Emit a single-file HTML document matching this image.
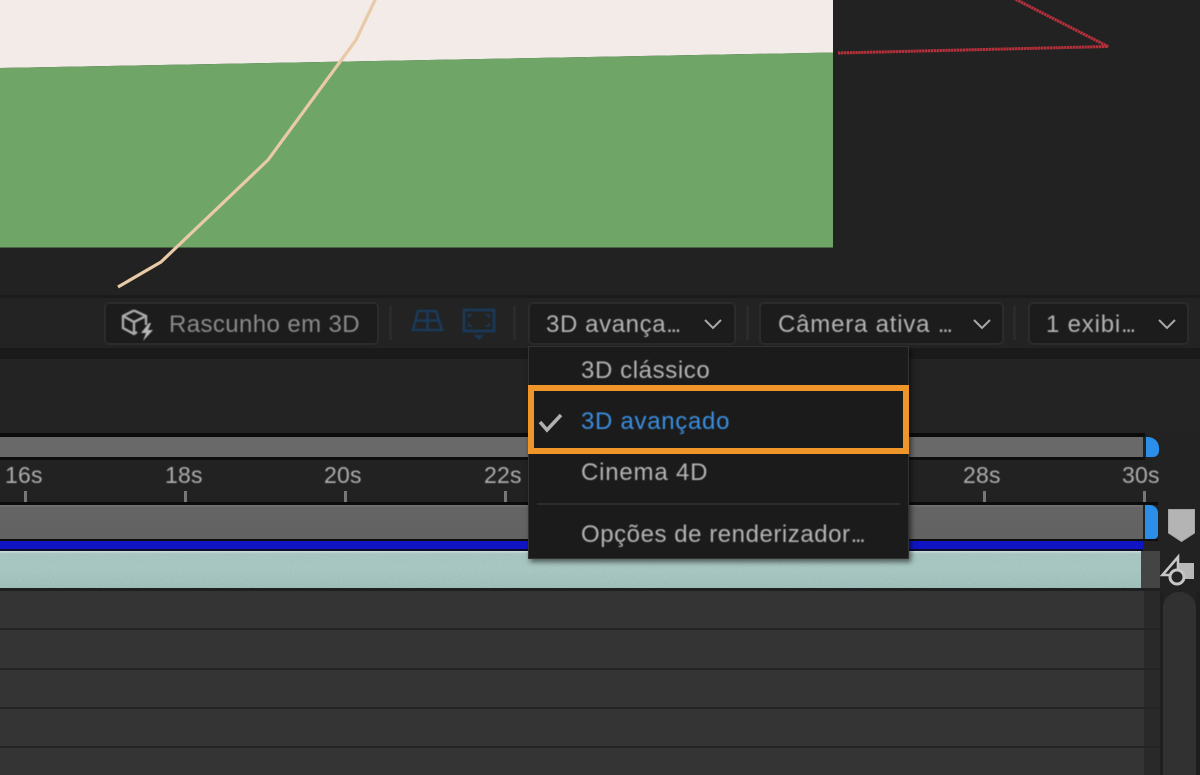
<!DOCTYPE html>
<html lang="pt">
<head>
<meta charset="utf-8">
<title>Renderizador 3D</title>
<style>
html,body{margin:0;padding:0;background:#222;}
#s{position:relative;width:1200px;height:775px;overflow:hidden;background:#222;font-family:"Liberation Sans",sans-serif;}
.b{position:absolute;}
.t{position:absolute;white-space:nowrap;font-size:24px;line-height:30px;letter-spacing:.6px;color:#b4b4b4;filter:blur(.5px);}
.d{letter-spacing:-2.4px;}
.btn{position:absolute;box-sizing:border-box;height:43px;top:302px;background:#1c1c1c;border:2px solid #2b2b2b;border-radius:5px;}
.rs{position:absolute;white-space:nowrap;font-size:23px;line-height:28px;color:#adadad;top:461px;letter-spacing:.2px;filter:blur(.5px);}
.tick{position:absolute;top:491px;width:3px;height:11px;background:#777;}
.row{position:absolute;left:0;width:1160px;height:2px;background:#242424;}
svg{position:absolute;overflow:visible;}
</style>
</head>
<body>
<div id="s">
<svg style="left:0;top:0" width="1200" height="300" viewBox="0 0 1200 300">
<polygon points="0,0 833,0 833,52.500 0,68" fill="#f3ebe8"/>
<polygon points="0,68 833,52.500 833,247.500 0,247.500" fill="#6fa566"/>
<polyline points="376,-2 356,40 268,160 161,262 118,287" fill="none" stroke="#e8cba6" stroke-width="3.200"/>
<polyline points="838,53 1108,46.500 1015,-1" fill="none" stroke="#b5303a" stroke-width="3" stroke-dasharray="2.400 .5"/>
</svg>

<div class="b" style="left:0;top:295px;width:1200px;height:3px;background:#1b1b1b"></div>
<div class="b" style="left:0;top:298px;width:1200px;height:50px;background:#232323"></div>
<div class="b" style="left:0;top:348px;width:1200px;height:11px;background:#1a1a1a"></div>
<div class="b" style="left:0;top:359px;width:1200px;height:74px;background:#232323"></div>

<div class="btn" style="left:104px;width:275px"></div>
<svg style="left:120px;top:308px;filter:blur(.4px)" width="40" height="36" viewBox="0 0 40 36" fill="none">
<path d="M14 2.500 L26 8 L26 17 M14 2.500 L3 8 L3 20 L14 26 L17 24 M3 8 L14 14 L26 8 M14 14 L14 26" stroke="#ababab" stroke-width="2.400"/>
<path d="M29 15 L21 25 L26 25 L23 33 L33 22 L28 22 L31 15 Z" fill="#b8b8b8"/>
</svg>
<div class="t" style="left:169px;top:310px;color:#8b8b8b;letter-spacing:.4px">Rascunho em 3D</div>

<div class="b" style="left:389px;top:306px;width:3px;height:34px;background:#2b2b2b"></div>
<svg style="left:410px;top:305px;filter:blur(.5px)" width="40" height="36" viewBox="0 0 40 36" fill="none" stroke="#1b3a5a" stroke-width="2.600">
<path d="M8 6 H26 L32 25 H3 Z M5 15.500 H29 M17.500 6 V25"/>
</svg>
<svg style="left:460px;top:305px;filter:blur(.5px)" width="40" height="40" viewBox="0 0 40 40" fill="none">
<rect x="4" y="5" width="30" height="21" stroke="#1b3a5a" stroke-width="2.800"/>
<path d="M9 13 V10 H12 M26 10 H29 V13 M9 18 V21 H12 M26 21 H29 V18" stroke="#1b3a5a" stroke-width="1.800"/>
<path d="M24 30 H14 L19 35 Z" fill="#1b3a5a"/>
</svg>
<div class="b" style="left:513px;top:306px;width:3px;height:34px;background:#2b2b2b"></div>

<div class="btn" style="left:528px;width:208px"></div>
<div class="t" style="left:546px;top:310px">3D avança<span class="d">...</span></div>
<svg style="left:703px;top:318px;filter:blur(.3px)" width="20" height="12" viewBox="0 0 20 12" fill="none"><path d="M2 2 L10 10 L18 2" stroke="#a8a8a8" stroke-width="2"/></svg>

<div class="b" style="left:746px;top:306px;width:3px;height:34px;background:#2b2b2b"></div>

<div class="btn" style="left:759px;width:245px"></div>
<div class="t" style="left:778px;top:310px;letter-spacing:.8px">Câmera ativa <span class="d">...</span></div>
<svg style="left:972px;top:318px;filter:blur(.3px)" width="20" height="12" viewBox="0 0 20 12" fill="none"><path d="M2 2 L10 10 L18 2" stroke="#a8a8a8" stroke-width="2"/></svg>

<div class="b" style="left:1013px;top:306px;width:3px;height:34px;background:#2b2b2b"></div>

<div class="btn" style="left:1028px;width:161px"></div>
<div class="t" style="left:1046px;top:310px;letter-spacing:.8px">1 exibi<span class="d">...</span></div>
<svg style="left:1157px;top:318px;filter:blur(.3px)" width="20" height="12" viewBox="0 0 20 12" fill="none"><path d="M2 2 L10 10 L18 2" stroke="#a8a8a8" stroke-width="2"/></svg>

<!-- upper bar -->
<div class="b" style="left:0;top:433px;width:1145px;height:4px;background:#0c0c0c"></div>
<div class="b" style="left:0;top:437px;width:1143px;height:20px;background:#696969"></div>
<div class="b" style="left:0;top:457px;width:1145px;height:3px;background:#0f0f0f"></div>
<div class="b" style="left:1146px;top:437px;width:13px;height:20px;background:#2b8ee8;border-radius:0 11px 6px 0"></div>

<!-- ruler -->
<div class="rs" style="left:5px">16s</div><div class="tick" style="left:24px"></div>
<div class="rs" style="left:165px">18s</div><div class="tick" style="left:184px"></div>
<div class="rs" style="left:324px">20s</div><div class="tick" style="left:344px"></div>
<div class="rs" style="left:484px">22s</div><div class="tick" style="left:504px"></div>
<div class="rs" style="left:963px">28s</div><div class="tick" style="left:983px"></div>
<div class="rs" style="left:1122px">30s</div><div class="tick" style="left:1143px"></div>

<!-- work bar -->
<div class="b" style="left:0;top:502px;width:1158px;height:3px;background:#0c0c0c"></div>
<div class="b" style="left:0;top:505px;width:1143px;height:35px;background:linear-gradient(#737373 0,#646464 3px,#626262 100%)"></div>
<div class="b" style="left:0;top:539px;width:1158px;height:2px;background:#0d0d0d"></div>
<div class="b" style="left:1145px;top:505px;width:13px;height:34px;background:#2b8ee8;border-radius:0 8px 4px 0"></div>
<div class="b" style="left:0;top:541px;width:1143px;height:8px;background:#1015c4"></div>
<div class="b" style="left:0;top:549px;width:1143px;height:2px;background:#0d0d30"></div>

<!-- teal layer -->
<div class="b" style="left:0;top:551px;width:1141px;height:37px;background:linear-gradient(#d0dfda 0,#a4c3bf 3px,#a6c5c0 50%,#9dbdb8 100%)"></div>
<svg style="left:0;top:554px;overflow:hidden" width="1141" height="33"><filter id="n" x="0" y="0" width="100%" height="100%"><feTurbulence type="fractalNoise" baseFrequency=".6" numOctaves="2"/><feColorMatrix values="0 0 0 0 .5 0 0 0 0 .62 0 0 0 0 .6 0 0 0 2 -.8"/></filter><rect width="1141" height="33" filter="url(#n)" opacity=".45"/></svg>
<div class="b" style="left:1141px;top:551px;width:19px;height:37px;background:#444"></div>
<div class="b" style="left:0;top:588px;width:1160px;height:3px;background:#202020"></div>

<!-- rows -->
<div class="b" style="left:0;top:591px;width:1144px;height:184px;background:#343434"></div>
<div class="b" style="left:1144px;top:591px;width:16px;height:184px;background:#292929"></div>
<div class="row" style="top:628px"></div>
<div class="row" style="top:668px"></div>
<div class="row" style="top:707px"></div>
<div class="row" style="top:746px"></div>
<div class="b" style="left:1160px;top:591px;width:3px;height:184px;background:#1f1f1f"></div>
<div class="b" style="left:1163px;top:592px;width:33px;height:183px;background:#313131;border-radius:16px 16px 0 0"></div>
<div class="b" style="left:1196px;top:591px;width:4px;height:184px;background:#1e1e1e"></div>

<!-- right icons -->
<svg style="left:1165px;top:507px" width="34" height="40" viewBox="0 0 34 40"><path d="M3.500 2.500 H29.500 V26 L16.500 34.500 L3.500 26 Z" fill="#b4b4b4" stroke="#a4a4a4" stroke-width="1"/></svg>
<svg style="left:1160px;top:553px;filter:blur(.3px)" width="38" height="36" viewBox="0 0 38 36" fill="none">
<path d="M16 10 H34 V26 H22 Z" fill="#b8b8b8"/>
<path d="M2.500 22 L18 4 V22 Z" fill="#232323" stroke="#c6c6c6" stroke-width="2.600"/>
<circle cx="17" cy="24" r="7" fill="#232323" stroke="#c6c6c6" stroke-width="3"/>
</svg>

<!-- dropdown -->
<div class="b" style="left:528px;top:346px;width:381px;height:213px;box-sizing:border-box;background:#1b1b1b;border:1px solid #333;box-shadow:2px 3px 5px rgba(0,0,0,.55)"></div>
<div class="t" style="left:581px;top:356px">3D clássico</div>
<div class="t" style="left:581px;top:407px;color:#3b8fe0;letter-spacing:.7px">3D avançado</div>
<svg style="left:538px;top:411px;filter:blur(.3px)" width="26" height="22" viewBox="0 0 26 22" fill="none"><path d="M2 11 L9 19 L23 4" stroke="#b0b0b0" stroke-width="3.600"/></svg>
<div class="t" style="left:581px;top:458px;letter-spacing:.8px">Cinema 4D</div>
<div class="b" style="left:537px;top:503px;width:363px;height:2px;background:#2c2c2c"></div>
<div class="t" style="left:581px;top:520px;letter-spacing:.55px">Opções de renderizador<span class="d">...</span></div>
<div class="b" style="left:528px;top:385px;width:381px;height:69px;box-sizing:border-box;border:6px solid #f0952a"></div>
</div>
</body>
</html>
